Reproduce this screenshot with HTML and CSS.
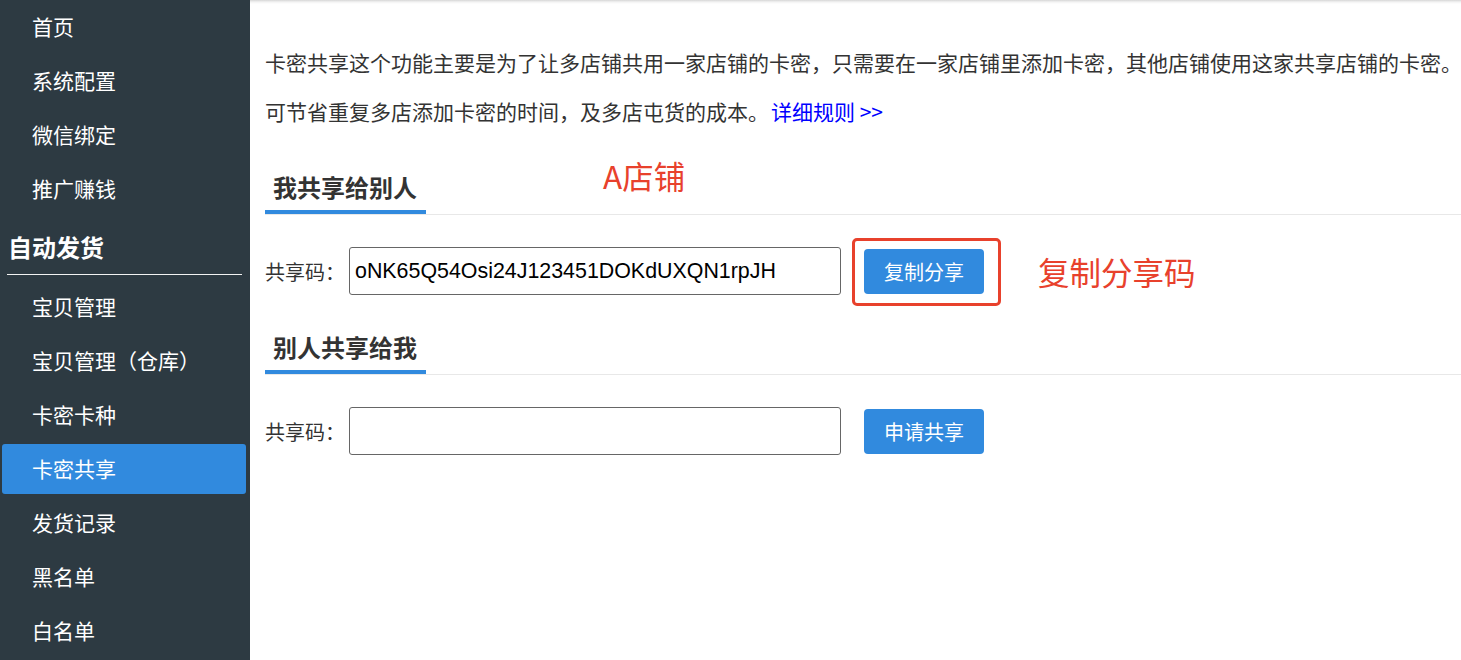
FILE: index.html
```html
<!DOCTYPE html>
<html lang="zh-CN">
<head>
<meta charset="utf-8">
<title>卡密共享</title>
<link rel="stylesheet" href="styles.css">
</head>
<body>
<div class="app">
  <aside class="sidebar">
    <ul class="menu">
      <li class="menu-item"><a class="menu-link">首页</a></li>
      <li class="menu-item"><a class="menu-link">系统配置</a></li>
      <li class="menu-item"><a class="menu-link">微信绑定</a></li>
      <li class="menu-item"><a class="menu-link">推广赚钱</a></li>
    </ul>
    <div class="menu-group">自动发货</div>
    <ul class="menu">
      <li class="menu-item"><a class="menu-link">宝贝管理</a></li>
      <li class="menu-item"><a class="menu-link">宝贝管理（仓库）</a></li>
      <li class="menu-item"><a class="menu-link">卡密卡种</a></li>
      <li class="menu-item"><a class="menu-link active">卡密共享</a></li>
      <li class="menu-item"><a class="menu-link">发货记录</a></li>
      <li class="menu-item"><a class="menu-link">黑名单</a></li>
      <li class="menu-item"><a class="menu-link">白名单</a></li>
    </ul>
  </aside>
  <main class="main">
    <p class="intro">卡密共享这个功能主要是为了让多店铺共用一家店铺的卡密，只需要在一家店铺里添加卡密，其他店铺使用这家共享店铺的卡密。</p>
    <p class="intro">可节省重复多店添加卡密的时间，及多店屯货的成本。<a class="rule-link">详细规则 &gt;&gt;</a></p>

    <div class="section-title first"><span class="title-text">我共享给别人</span></div>
    <div class="note note-shop">A店铺</div>
    <div class="form-row">
      <label class="form-label">共享码：</label>
      <input class="code-input" type="text" value="oNK65Q54Osi24J123451DOKdUXQN1rpJH" readonly>
      <div class="btn-wrap marked">
        <button class="btn">复制分享</button>
      </div>
      <span class="note note-copy">复制分享码</span>
    </div>

    <div class="section-title"><span class="title-text">别人共享给我</span></div>
    <div class="form-row">
      <label class="form-label">共享码：</label>
      <input class="code-input" type="text" value="">
      <div class="btn-wrap">
        <button class="btn">申请共享</button>
      </div>
    </div>
  </main>
</div>
</body>
</html>
```

FILE: styles.css
```css
* { box-sizing: border-box; }

html, body {
  margin: 0;
  padding: 0;
  height: 100%;
  overflow: hidden;
}

body {
  font-family: "Noto Sans CJK SC", "Microsoft YaHei", sans-serif;
  color: #333;
  background: #fff;
}

.app {
  display: flex;
  height: 660px;
}

/* ---------- sidebar ---------- */
.sidebar {
  width: 250px;
  flex: 0 0 250px;
  background: #2d3a42;
  color: #fff;
}

.menu {
  list-style: none;
  margin: 0;
  padding: 0;
}

.menu-item {
  height: 54px;
  padding: 2px 4px 2px 2px;
}

.menu-link {
  display: block;
  height: 50px;
  line-height: 49px;
  padding-left: 30px;
  font-size: 21px;
  color: #fff;
  border-radius: 3px;
  white-space: nowrap;
}

.menu-link.active {
  background: #318ade;
}

.menu-group {
  margin: 0 8px 5px 7px;
  padding: 14px 0 11px 1px;
  line-height: 33px;
  font-size: 24px;
  font-weight: bold;
  border-bottom: 1px solid #f2f2f2;
}

/* ---------- main ---------- */
.main {
  flex: 1;
  position: relative;
  padding: 38px 0 0 15px;
  background: linear-gradient(#d6d6d6 0, #f3f3f3 2px, #fff 4px);
}

.intro {
  margin: 0;
  font-size: 21px;
  line-height: 49px;
  color: #333;
  white-space: nowrap;
}

.rule-link {
  color: #0000ff;
  margin-left: 2px;
}

.section-title {
  margin-top: 35px;
  border-bottom: 1px solid #e8e8e8;
  line-height: 0;
}

.section-title.first {
  margin-top: 34px;
}

.title-text {
  display: inline-block;
  padding: 0 9px 6px 8px;
  line-height: 34px;
  font-size: 24px;
  font-weight: bold;
  color: #333;
  border-bottom: 4px solid #318ade;
}

.form-row {
  display: flex;
  align-items: center;
  margin-top: 32px;
}

.form-label {
  width: 84px;
  font-size: 20px;
  color: #333;
  white-space: nowrap;
}

.code-input {
  width: 492px;
  height: 48px;
  padding: 0 5px;
  border: 1px solid #666;
  border-radius: 3px;
  font-family: "Liberation Sans", Arial, sans-serif;
  font-size: 21.4px;
  color: #000;
  outline: none;
}

.btn-wrap {
  position: relative;
  margin-left: 23px;
}

.btn {
  display: block;
  width: 120px;
  height: 45px;
  border: 0;
  border-radius: 4px;
  background: #318ade;
  color: #fff;
  font-family: "Noto Sans CJK SC", "Microsoft YaHei", sans-serif;
  font-size: 20px;
}

/* annotations drawn over the screenshot */
.marked::after {
  content: "";
  position: absolute;
  left: -12px;
  top: -11px;
  right: -17px;
  bottom: -12px;
  border: 3px solid #e8412c;
  border-radius: 5px;
}

.note {
  color: #e8412c;
  font-size: 31.5px;
  line-height: 40px;
  white-space: nowrap;
}

.note-shop {
  position: absolute;
  left: 353px;
  top: 155px;
}

.note-copy {
  margin-left: 54px;
}
```
